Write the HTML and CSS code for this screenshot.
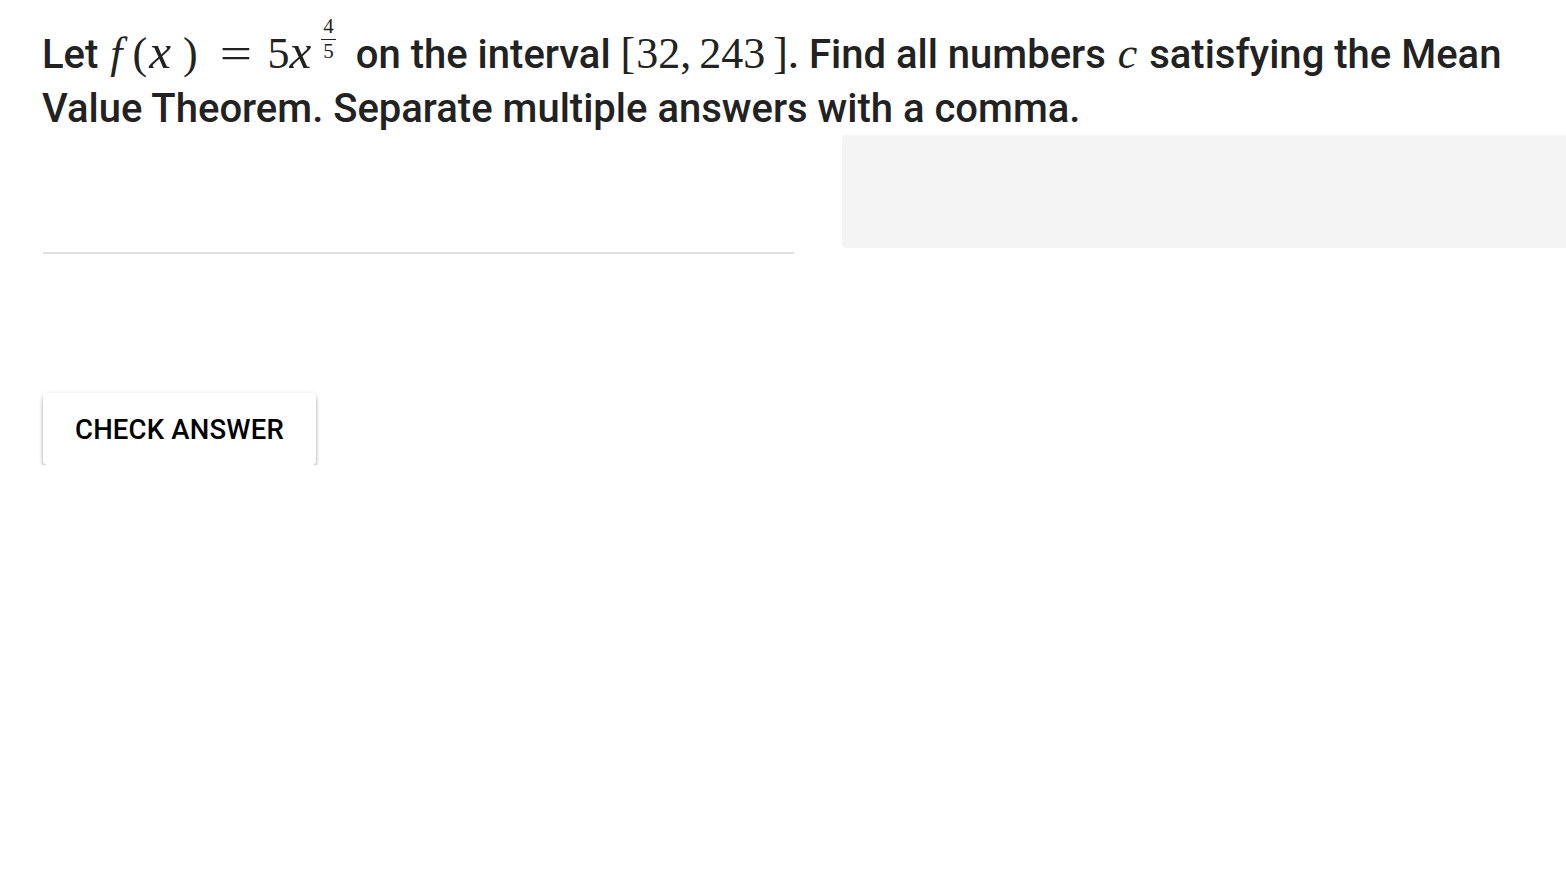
FILE: index.html
```html
<!DOCTYPE html>
<html>
<head>
<meta charset="utf-8">
<link rel="stylesheet" href="styles.css">
</head>
<body>
<main class="page">
  <p class="question">Let <span class="math"><i class="mi-f">f</i><span class="paren">(</span><i class="mi-x">x</i><span class="paren">)</span><span class="rel">=</span><span class="mn">5</span><i class="mi-x2">x</i><span class="frac"><span class="num">4</span><span class="den">5</span></span></span> on the interval <span class="math"><span class="brk-l">[</span>32,<span class="thin"></span>243<span class="brk-r">]</span></span>. Find all numbers <span class="math"><i class="mi-c">c</i></span> satisfying the Mean Value Theorem. Separate multiple answers with a comma.</p>
  <div class="answer-row">
    <div class="field"><div class="field-line"></div></div>
    <div class="preview"></div>
  </div>
  <button class="check">CHECK ANSWER</button>
</main>
</body>
</html>
```
FILE: styles.css
```css
html, body {
  margin: 0;
  padding: 0;
  background: #fff;
  overflow: hidden;
}
.page {
  padding: 16px 0 0 42px;
  font-family: Roboto, "Liberation Sans", sans-serif;
  color: #222;
}
.question {
  margin: 0;
  font-size: 40px;
  font-weight: 500;
  line-height: 54px;
  padding-right: 40px;
}
.math {
  font-family: "Liberation Serif", "DejaVu Serif", serif;
  font-weight: 400;
  font-size: 44px;
  white-space: nowrap;
}
.math i {
  font-style: italic;
}
.mi-f {
  margin-left: 2px;
  margin-right: 10px;
}
.mi-x, .mi-x2 {
  font-size: 49px;
  line-height: 1;
}
.mi-x {
  margin-left: 2px;
  margin-right: 12px;
}
.rel {
  display: inline-block;
  width: 34px;
  text-align: center;
  transform: scaleX(1.3);
  margin: 0 15px 0 21px;
}
.mi-c {
  margin: 0 2px;
}
.thin {
  display: inline-block;
  width: 8px;
}
.brk-l {
  margin-right: 1px;
}
.brk-r {
  margin-left: 8px;
}
.frac {
  display: inline-flex;
  flex-direction: column;
  align-items: center;
  font-size: 21px;
  line-height: 1;
  vertical-align: 35px;
  margin-left: 10px;
  margin-right: 10px;
}
.frac .num {
  border-bottom: 1px solid #222;
  padding: 0 2px 2px;
}
.frac .den {
  padding-top: 1px;
}
.answer-row {
  display: flex;
  gap: 48px;
  margin-top: -1px;
}
.field {
  width: 751px;
  height: 119px;
  display: flex;
  flex-direction: column;
  justify-content: flex-end;
  margin-left: 1px;
}
.field-line {
  height: 2px;
  background: #e0e0e0;
}
.preview {
  flex: 1;
  height: 113px;
  background: #f4f4f4;
  border-radius: 4px 0 0 4px;
}
.check {
  display: block;
  margin: 139px 0 0 1px;
  width: 273px;
  height: 72px;
  border: none;
  border-radius: 4px;
  background: #fff;
  color: #000;
  font-family: Roboto, "Liberation Sans", sans-serif;
  font-size: 27.5px;
  font-weight: 500;
  letter-spacing: 0.2px;
  box-shadow: 0 3px 4px -1px rgba(0,0,0,0.45), 0 1px 5px rgba(0,0,0,0.12);
  padding: 0;
}
```
